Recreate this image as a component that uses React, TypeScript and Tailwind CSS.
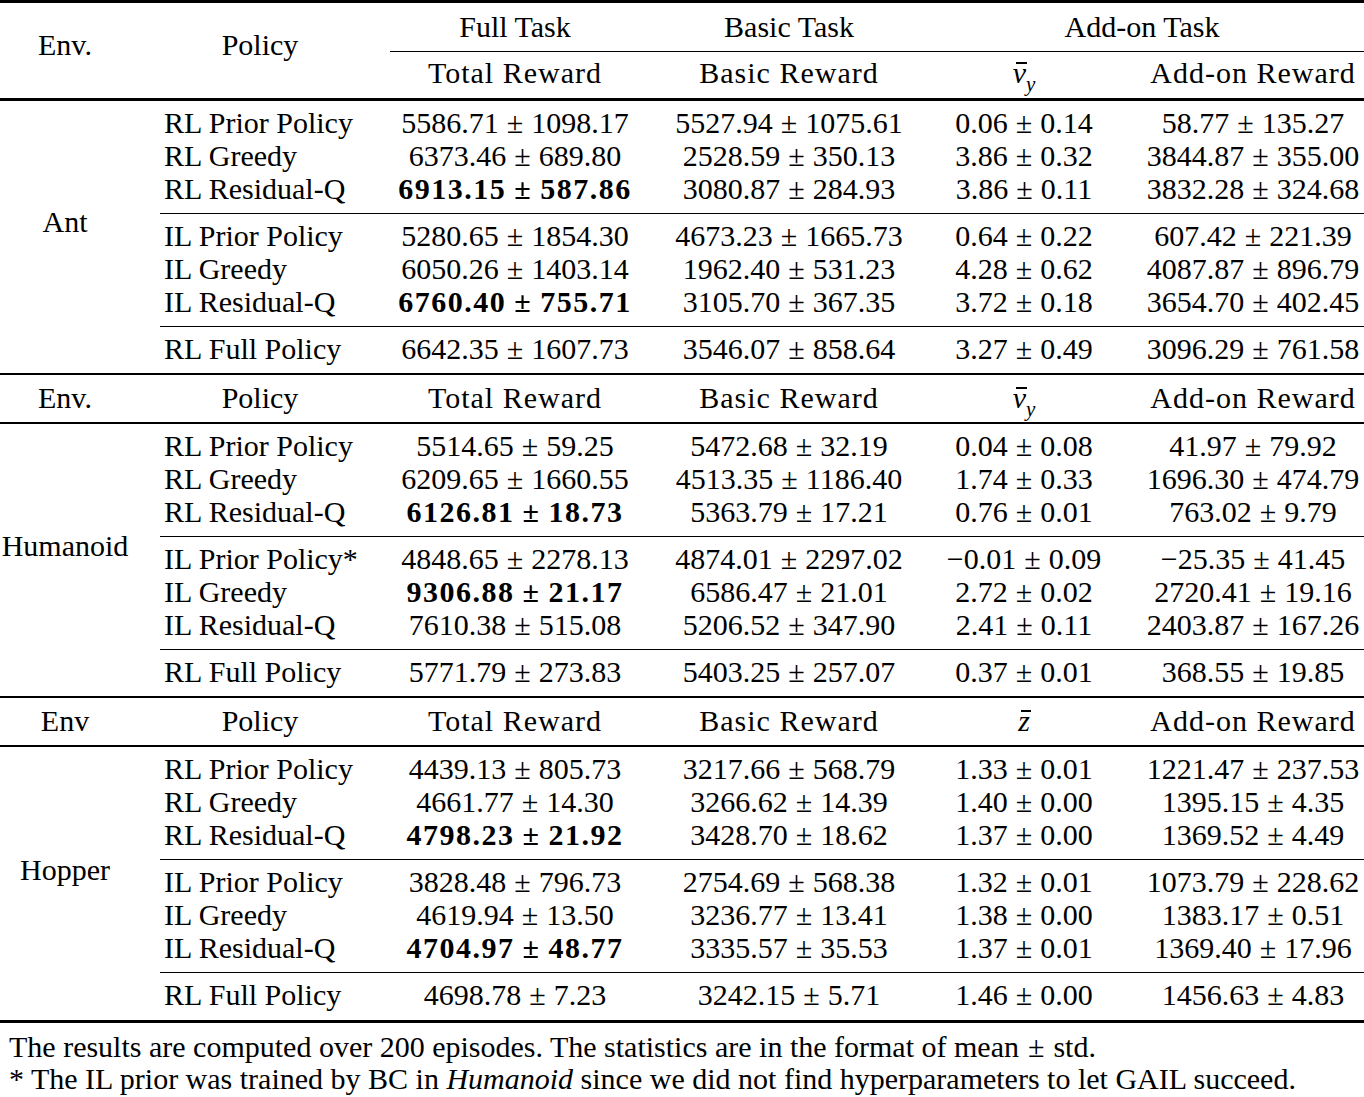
type Num = { m: string; s: string; b?: boolean };
type Row = { policy: string; cells: Num[] };

const n = (m: string, s: string, b = false): Num => ({ m, s, b });

const ant: Row[][] = [
  [
    { policy: "RL Prior Policy", cells: [n("5586.71", "1098.17"), n("5527.94", "1075.61"), n("0.06", "0.14"), n("58.77", "135.27")] },
    { policy: "RL Greedy", cells: [n("6373.46", "689.80"), n("2528.59", "350.13"), n("3.86", "0.32"), n("3844.87", "355.00")] },
    { policy: "RL Residual-Q", cells: [n("6913.15", "587.86", true), n("3080.87", "284.93"), n("3.86", "0.11"), n("3832.28", "324.68")] },
  ],
  [
    { policy: "IL Prior Policy", cells: [n("5280.65", "1854.30"), n("4673.23", "1665.73"), n("0.64", "0.22"), n("607.42", "221.39")] },
    { policy: "IL Greedy", cells: [n("6050.26", "1403.14"), n("1962.40", "531.23"), n("4.28", "0.62"), n("4087.87", "896.79")] },
    { policy: "IL Residual-Q", cells: [n("6760.40", "755.71", true), n("3105.70", "367.35"), n("3.72", "0.18"), n("3654.70", "402.45")] },
  ],
  [
    { policy: "RL Full Policy", cells: [n("6642.35", "1607.73"), n("3546.07", "858.64"), n("3.27", "0.49"), n("3096.29", "761.58")] },
  ],
];

const humanoid: Row[][] = [
  [
    { policy: "RL Prior Policy", cells: [n("5514.65", "59.25"), n("5472.68", "32.19"), n("0.04", "0.08"), n("41.97", "79.92")] },
    { policy: "RL Greedy", cells: [n("6209.65", "1660.55"), n("4513.35", "1186.40"), n("1.74", "0.33"), n("1696.30", "474.79")] },
    { policy: "RL Residual-Q", cells: [n("6126.81", "18.73", true), n("5363.79", "17.21"), n("0.76", "0.01"), n("763.02", "9.79")] },
  ],
  [
    { policy: "IL Prior Policy*", cells: [n("4848.65", "2278.13"), n("4874.01", "2297.02"), n("\u22120.01", "0.09"), n("\u221225.35", "41.45")] },
    { policy: "IL Greedy", cells: [n("9306.88", "21.17", true), n("6586.47", "21.01"), n("2.72", "0.02"), n("2720.41", "19.16")] },
    { policy: "IL Residual-Q", cells: [n("7610.38", "515.08"), n("5206.52", "347.90"), n("2.41", "0.11"), n("2403.87", "167.26")] },
  ],
  [
    { policy: "RL Full Policy", cells: [n("5771.79", "273.83"), n("5403.25", "257.07"), n("0.37", "0.01"), n("368.55", "19.85")] },
  ],
];

const hopper: Row[][] = [
  [
    { policy: "RL Prior Policy", cells: [n("4439.13", "805.73"), n("3217.66", "568.79"), n("1.33", "0.01"), n("1221.47", "237.53")] },
    { policy: "RL Greedy", cells: [n("4661.77", "14.30"), n("3266.62", "14.39"), n("1.40", "0.00"), n("1395.15", "4.35")] },
    { policy: "RL Residual-Q", cells: [n("4798.23", "21.92", true), n("3428.70", "18.62"), n("1.37", "0.00"), n("1369.52", "4.49")] },
  ],
  [
    { policy: "IL Prior Policy", cells: [n("3828.48", "796.73"), n("2754.69", "568.38"), n("1.32", "0.01"), n("1073.79", "228.62")] },
    { policy: "IL Greedy", cells: [n("4619.94", "13.50"), n("3236.77", "13.41"), n("1.38", "0.00"), n("1383.17", "0.51")] },
    { policy: "IL Residual-Q", cells: [n("4704.97", "48.77", true), n("3335.57", "35.53"), n("1.37", "0.01"), n("1369.40", "17.96")] },
  ],
  [
    { policy: "RL Full Policy", cells: [n("4698.78", "7.23"), n("3242.15", "5.71"), n("1.46", "0.00"), n("1456.63", "4.83")] },
  ],
];

const Value = ({ v }: { v: Num }) => (
  <span className={v.b ? "font-bold tracking-[1.5px]" : ""}>
    {v.m}
    <span className="mx-[8px]">±</span>
    {v.s}
  </span>
);

// letter with a bar over it, for \bar{v}_y and \bar{z}
const Bar = ({ ch, sub }: { ch: string; sub?: string }) => (
  <span>
    <span className="relative inline-block italic">
      {ch}
      <span className="absolute left-[3px] right-[-1px] top-[6px] h-[2px] bg-black" />
    </span>
    {sub && <span className="relative top-[8px] text-[21px] leading-[0] italic">{sub}</span>}
  </span>
);

const cols = "grid grid-cols-[260px_250px_298px_172px_286px]";

const Group = ({ rows }: { rows: Row[] }) => (
  <div className="pt-[5px] pb-[8px]">
    {rows.map((r) => (
      <div key={r.policy} className={cols}>
        <div className="pl-[34px]">{r.policy}</div>
        {r.cells.map((c, i) => (
          <div key={i} className="text-center whitespace-nowrap">
            <Value v={c} />
          </div>
        ))}
      </div>
    ))}
  </div>
);

const Section = ({ env, groups, lift }: { env: string; groups: Row[][]; lift: string }) => (
  <div className="flex">
    <div className={`flex w-[130px] items-center justify-center ${lift}`}>{env}</div>
    <div className="flex-1">
      {groups.map((g, i) => (
        <div key={i}>
          {i > 0 && <div className="ml-[30px] h-px bg-black" />}
          <Group rows={g} />
        </div>
      ))}
    </div>
  </div>
);

const SubHeader = ({ env, sym }: { env: string; sym: React.ReactNode }) => (
  <div className="grid grid-cols-[130px_260px_250px_298px_172px_286px] pt-[6px] pb-[8px] text-center">
    <div>{env}</div>
    <div>Policy</div>
    <div className="tracking-[1px]">Total Reward</div>
    <div className="tracking-[1px]">Basic Reward</div>
    <div>{sym}</div>
    <div className="tracking-[1px]">Add-on Reward</div>
  </div>
);

export default function App() {
  return (
    <div className="w-[1364px] overflow-hidden bg-white [font-family:Liberation_Serif,Times_New_Roman,serif] text-[30px] leading-[33px] text-black">
      <div className="w-[1396px]">
        <div className="h-[3px] bg-black" />
        <div className="flex">
          <div className="flex w-[130px] items-center justify-center pb-[13px]">Env.</div>
          <div className="flex w-[260px] items-center justify-center pb-[13px]">Policy</div>
          <div className="flex-1">
            <div className="grid grid-cols-[250px_298px_458px] pt-[7px] pb-[8px] text-center">
              <div>Full Task</div>
              <div>Basic Task</div>
              <div className="pr-[50px]">Add-on Task</div>
            </div>
            <div className="h-px bg-black" />
            <div className="grid grid-cols-[250px_298px_172px_286px] pt-[4px] pb-[9px] text-center">
              <div className="tracking-[1px]">Total Reward</div>
              <div className="tracking-[1px]">Basic Reward</div>
              <div>
                <Bar ch="v" sub="y" />
              </div>
              <div className="tracking-[1px]">Add-on Reward</div>
            </div>
          </div>
        </div>
        <div className="h-[3px] bg-black" />

        <Section env="Ant" groups={ant} lift="pb-[32px]" />
        <div className="h-[2px] bg-black" />
        <SubHeader env="Env." sym={<Bar ch="v" sub="y" />} />
        <div className="h-[2px] bg-black" />

        <Section env="Humanoid" groups={humanoid} lift="pb-[30px]" />
        <div className="h-[2px] bg-black" />
        <SubHeader env="Env" sym={<Bar ch="z" />} />
        <div className="h-[2px] bg-black" />

        <Section env="Hopper" groups={hopper} lift="pb-[28px]" />
        <div className="mt-[1px] h-[3px] bg-black" />

        <div className="pt-[8px] pl-[9px] text-[30px] leading-[32px]">
          <p>
            The results are computed over 200 episodes. The statistics are in the format of mean
            <span className="mx-[9px]">±</span>std.
          </p>
          <p>
            * The IL prior was trained by BC in <span className="italic">Humanoid</span> since we did not find
            hyperparameters to let GAIL succeed.
          </p>
        </div>
      </div>
    </div>
  );
}
